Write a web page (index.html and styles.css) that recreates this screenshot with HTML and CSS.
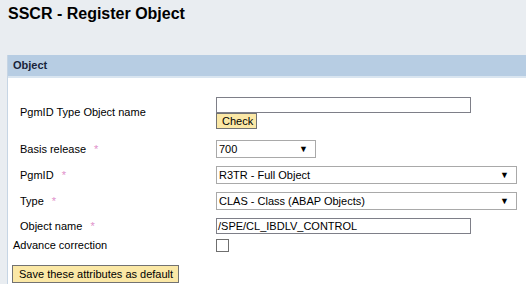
FILE: index.html
```html
<!DOCTYPE html>
<html>
<head>
<meta charset="utf-8">
<link rel="stylesheet" href="styles.css">
</head>
<body>
<h1 class="title">SSCR - Register Object</h1>
<div class="panel">
  <div class="panel-head">Object</div>
  <div class="panel-body">
    <div class="row row-first">
      <div class="label">PgmID Type Object name</div>
      <div class="ctl ctl-stack">
        <div class="input wide"></div>
        <div class="btn btn-check">Check</div>
      </div>
    </div>
    <div class="row row-sel">
      <div class="label">Basis release<span class="req">*</span></div>
      <div class="ctl"><div class="select small"><span>700</span><span class="arrow">&#9660;</span></div></div>
    </div>
    <div class="row row-sel">
      <div class="label">PgmID<span class="req">*</span></div>
      <div class="ctl"><div class="select large"><span>R3TR - Full Object</span><span class="arrow">&#9660;</span></div></div>
    </div>
    <div class="row row-sel">
      <div class="label">Type<span class="req">*</span></div>
      <div class="ctl"><div class="select large"><span>CLAS - Class (ABAP Objects)</span><span class="arrow">&#9660;</span></div></div>
    </div>
    <div class="row row-obj">
      <div class="label">Object name<span class="req">*</span></div>
      <div class="ctl"><div class="input wide">/SPE/CL_IBDLV_CONTROL</div></div>
    </div>
    <div class="row row-chk">
      <div class="label label-out">Advance correction</div>
      <div class="ctl"><div class="checkbox"></div></div>
    </div>
    <div class="btn btn-save">Save these attributes as default</div>
  </div>
</div>
</body>
</html>
```
FILE: styles.css
```css
html, body {
  margin: 0;
  padding: 0;
}
body {
  background: #e9edf1;
  font-family: "Liberation Sans", Arial, sans-serif;
  font-size: 11px;
  color: #000;
  width: 526px;
  height: 284px;
  overflow: hidden;
}
.title {
  margin: 0;
  padding: 5px 0 0 8px;
  height: 55px;
  box-sizing: border-box;
  font-size: 16px;
  line-height: 18px;
  font-weight: bold;
  color: #000;
}
.panel {
  margin-left: 7px;
  border-left: 1px solid #c6d5e4;
  background: #fff;
  height: 229px;
}
.panel-head {
  background: #b7cde3;
  border-bottom: 2px solid #d9e5f0;
  box-sizing: border-box;
  height: 23px;
  padding: 4px 0 0 5px;
  font-weight: bold;
  font-size: 11px;
  line-height: 13px;
  color: #17243a;
}
.panel-body {
  padding: 19px 0 0 0;
}
.row {
  display: flex;
  align-items: center;
}
.label {
  width: 208px;
  padding-left: 12px;
  box-sizing: border-box;
  flex: none;
  line-height: 13px;
}
.label-out {
  padding-left: 5px;
}
.req {
  color: #e08fca;
  margin-left: 8px;
  font-size: 11px;
}
.ctl {
  flex: none;
}
.ctl-stack {
  display: flex;
  flex-direction: column;
  align-items: flex-start;
}
.row-first { height: 31px; }
.row-sel { margin-top: 12px; height: 18px; }
.row-sel + .row-sel { margin-top: 8px; }
.row-obj { margin-top: 8px; height: 16px; }
.row-chk { margin-top: 4px; height: 14px; }
.input {
  box-sizing: border-box;
  height: 16px;
  border: 1px solid #7e7f88;
  background: #fff;
  padding: 0 0 0 1px;
  line-height: 14px;
  white-space: nowrap;
}
.wide { width: 255px; }
.btn {
  box-sizing: border-box;
  background: #fbe8a6;
  border: 1px solid #727272;
  line-height: 14px;
  white-space: nowrap;
}
.btn-check {
  width: 41px;
  height: 16px;
  padding-left: 5px;
}
.btn-save {
  margin: 13px 0 0 4px;
  width: 167px;
  height: 18px;
  line-height: 16px;
  padding-left: 6px;
}
.select {
  box-sizing: border-box;
  height: 18px;
  border: 1px solid #a9a9a9;
  background: #fff;
  display: flex;
  align-items: center;
  justify-content: space-between;
  padding: 0 7px 0 2px;
  line-height: 16px;
}
.small { width: 100px; }
.large { width: 301px; }
.arrow {
  font-size: 9px;
  color: #000;
}
.checkbox {
  box-sizing: border-box;
  width: 13px;
  height: 13px;
  border: 1px solid #6f6f6f;
  background: #fff;
}
```
